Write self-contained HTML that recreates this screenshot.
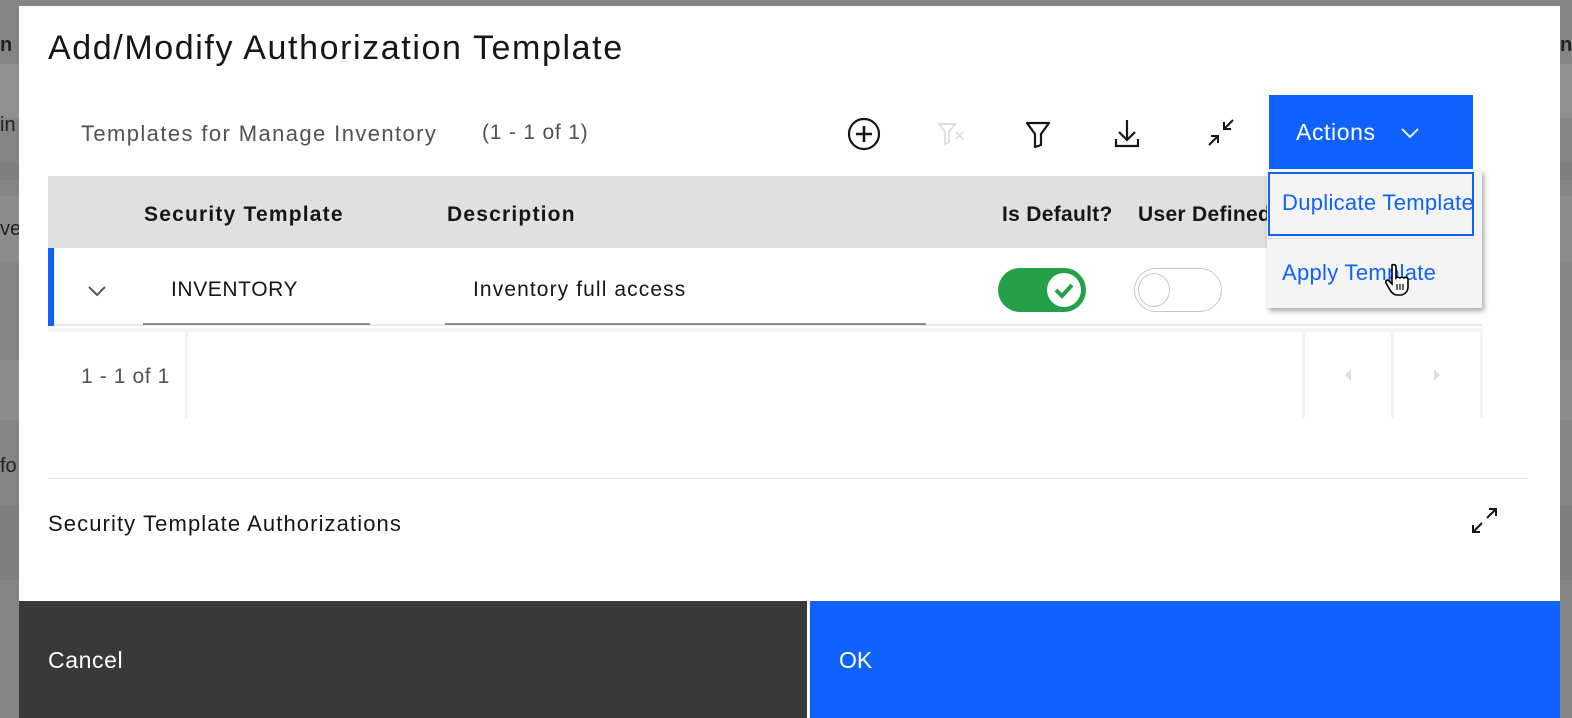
<!DOCTYPE html>
<html><head><meta charset="utf-8"><style>
*{box-sizing:border-box;margin:0;padding:0}
body{width:1572px;height:718px;overflow:hidden;background:#858585;font-family:"Liberation Sans",sans-serif;position:relative;color:#161616}
.abs{position:absolute;white-space:nowrap}
.bgstripe{position:absolute;left:0;width:1572px;background:#8a8a8a}
.modal{position:absolute;left:19px;top:6px;width:1541px;height:712px;background:#fff}
.h{font-size:21px;font-weight:bold;letter-spacing:1.2px}
</style></head><body>
<div class="bgstripe" style="top:64px;height:54px;background:#8f8f8f"></div>
<div class="bgstripe" style="top:162px;height:18px;background:#7f7f7f"></div>
<div class="bgstripe" style="top:196px;height:66px;background:#8c8c8c"></div>
<div class="bgstripe" style="top:360px;height:60px;background:#8c8c8c"></div>
<div class="bgstripe" style="top:505px;height:75px;background:#7f7f7f"></div>
<div class="abs" style="left:0;top:34px;font-size:20px;font-weight:bold;color:#222">n</div>
<div class="abs" style="left:0;top:114px;font-size:20px;color:#222">in</div>
<div class="abs" style="left:0;top:218px;font-size:20px;color:#222">ve</div>
<div class="abs" style="left:0;top:455px;font-size:20px;color:#222">fo</div>
<div class="abs" style="left:1560px;top:34px;font-size:20px;font-weight:bold;color:#222">n</div>

<div class="modal"></div>
<div class="abs" style="left:48px;top:29px;font-size:34px;letter-spacing:1.6px;color:#161616">Add/Modify Authorization Template</div>
<div class="abs" style="left:81px;top:121px;font-size:22px;letter-spacing:1.4px;color:#525252">Templates for Manage Inventory</div>
<div class="abs" style="left:482px;top:121px;font-size:21px;letter-spacing:0.8px;color:#525252">(1 - 1 of 1)</div>

<svg class="abs" style="left:846px;top:116px" width="36" height="36" viewBox="0 0 36 36"><circle cx="18" cy="18" r="15" fill="none" stroke="#161616" stroke-width="2.2"/><path d="M18 10v16M10 18h16" stroke="#161616" stroke-width="2.6"/></svg>
<svg class="abs" style="left:935px;top:118px" width="32" height="32" viewBox="0 0 32 32"><path d="M4 6h16l-6 8v10l-4 2V14z" fill="none" stroke="#ddd" stroke-width="1.8"/><path d="M21 14l7 7M28 14l-7 7" stroke="#ddd" stroke-width="1.6"/></svg>
<svg class="abs" style="left:1023px;top:118px" width="30" height="32" viewBox="0 0 30 32"><path d="M4 5h22l-8 11v11l-6 2V16z" fill="none" stroke="#161616" stroke-width="2.2" stroke-linejoin="round"/></svg>
<svg class="abs" style="left:1111px;top:116px" width="32" height="34" viewBox="0 0 32 34"><path d="M16 4v20M8 16l8 8 8-8M5 23v7h22v-7" fill="none" stroke="#161616" stroke-width="2.2"/></svg>
<svg class="abs" style="left:1204px;top:116px" width="34" height="34" viewBox="0 0 34 34"><path d="M29 4l-9 9M20 6v7h7M5 29l9-9M14 27v-7H7" fill="none" stroke="#161616" stroke-width="2"/></svg>

<div class="abs" style="left:1269px;top:95px;width:204px;height:74px;background:#0f62fe"></div>
<div class="abs" style="left:1296px;top:119px;font-size:23px;letter-spacing:0.6px;color:#fff">Actions</div>
<svg class="abs" style="left:1400px;top:126px" width="20" height="14" viewBox="0 0 20 14"><path d="M2 3l8 8 8-8" fill="none" stroke="#fff" stroke-width="1.8"/></svg>

<div class="abs" style="left:48px;top:176px;width:1434px;height:72px;background:#e0e0e0"></div>
<div class="abs h" style="left:144px;top:203px">Security Template</div>
<div class="abs h" style="left:447px;top:203px">Description</div>
<div class="abs h" style="left:1002px;top:203px;letter-spacing:0.3px">Is Default?</div>
<div class="abs h" style="left:1138px;top:203px;letter-spacing:0.3px">User Defined</div>

<div class="abs" style="left:48px;top:248px;width:1434px;height:78px;background:#fff;border-bottom:2px solid #e8e8e8"></div>
<div class="abs" style="left:48px;top:248px;width:6px;height:78px;background:#0f62fe"></div>
<svg class="abs" style="left:86px;top:284px" width="22" height="14" viewBox="0 0 22 14"><path d="M3 3l8 8 8-8" fill="none" stroke="#555" stroke-width="2"/></svg>
<div class="abs" style="left:171px;top:278px;font-size:21px;letter-spacing:0.6px">INVENTORY</div>
<div class="abs" style="left:143px;top:323px;width:227px;height:2px;background:#8d8d8d"></div>
<div class="abs" style="left:473px;top:278px;font-size:21px;letter-spacing:1.1px">Inventory full access</div>
<div class="abs" style="left:445px;top:323px;width:481px;height:2px;background:#8d8d8d"></div>
<div class="abs" style="left:998px;top:268px;width:88px;height:44px;border-radius:22px;background:#24a148"></div>
<div class="abs" style="left:1047px;top:273px;width:34px;height:34px;border-radius:50%;background:#fff"></div>
<svg class="abs" style="left:1047px;top:273px" width="34" height="34" viewBox="0 0 34 34"><path d="M9 17l6 6 10-11" fill="none" stroke="#24a148" stroke-width="4"/></svg>
<div class="abs" style="left:1134px;top:268px;width:88px;height:44px;border-radius:22px;background:#fff;border:1px solid #c6c6c6"></div>
<div class="abs" style="left:1138px;top:273px;width:32px;height:34px;border-radius:50%;border:1px solid #c6c6c6"></div>

<div class="abs" style="left:48px;top:328px;width:1434px;height:4px;background:#f4f4f4"></div>
<div class="abs" style="left:81px;top:365px;font-size:21px;letter-spacing:0.6px;color:#525252">1 - 1 of 1</div>
<div class="abs" style="left:185px;top:332px;width:3px;height:86px;background:#f4f4f4"></div>
<div class="abs" style="left:1302px;top:332px;width:3px;height:86px;background:#f4f4f4"></div>
<div class="abs" style="left:1391px;top:332px;width:3px;height:86px;background:#f4f4f4"></div>
<div class="abs" style="left:1480px;top:332px;width:3px;height:86px;background:#f4f4f4"></div>
<svg class="abs" style="left:1343px;top:367px" width="10" height="16"><path d="M8 2L2 8l6 6z" fill="#ddd"/></svg>
<svg class="abs" style="left:1432px;top:367px" width="10" height="16"><path d="M2 2l6 6-6 6z" fill="#ddd"/></svg>

<div class="abs" style="left:1267px;top:170px;width:215px;height:138px;background:#f4f4f4;box-shadow:2px 3px 5px rgba(0,0,0,.35)"></div>
<div class="abs" style="left:1268px;top:172px;width:206px;height:64px;border:2px solid #0f62fe"></div>
<div class="abs" style="left:1282px;top:190px;font-size:22px;letter-spacing:0.3px;color:#0f62fe">Duplicate Template</div>
<div class="abs" style="left:1268px;top:238px;width:206px;height:1px;background:#e0e0e0"></div>
<div class="abs" style="left:1282px;top:260px;font-size:22px;letter-spacing:0.3px;color:#0f62fe">Apply Template</div>
<svg class="abs" style="left:1384px;top:262px" width="32" height="36" viewBox="0 0 32 36"><path d="M8 3c2-1 4 0 4 2v11c1-1 3-1 4 0 1-1 3-1 4 0 1-1 3-1 4 1v8c0 4-3 8-8 8h-3c-3 0-5-2-7-5l-4-7c-1-2 1-4 3-2l3 3V5z" fill="#fff" stroke="#000" stroke-width="1.6"/><path d="M13 22v6M16 22v6M19 22v6" stroke="#000" stroke-width="1.2"/></svg>

<div class="abs" style="left:48px;top:478px;width:1480px;height:1px;background:#e0e0e0"></div>
<div class="abs" style="left:48px;top:511px;font-size:22px;letter-spacing:1.1px">Security Template Authorizations</div>
<svg class="abs" style="left:1468px;top:504px" width="34" height="34" viewBox="0 0 34 34"><path d="M28 5l-9 9M21 5h7v7M5 28l9-9M5 21v7h7" fill="none" stroke="#161616" stroke-width="2"/></svg>

<div class="abs" style="left:19px;top:601px;width:788px;height:117px;background:#393939"></div>
<div class="abs" style="left:48px;top:647px;font-size:23px;letter-spacing:0.6px;color:#fff">Cancel</div>
<div class="abs" style="left:810px;top:601px;width:750px;height:117px;background:#0f62fe"></div>
<div class="abs" style="left:839px;top:647px;font-size:23px;color:#fff">OK</div>
</body></html>
